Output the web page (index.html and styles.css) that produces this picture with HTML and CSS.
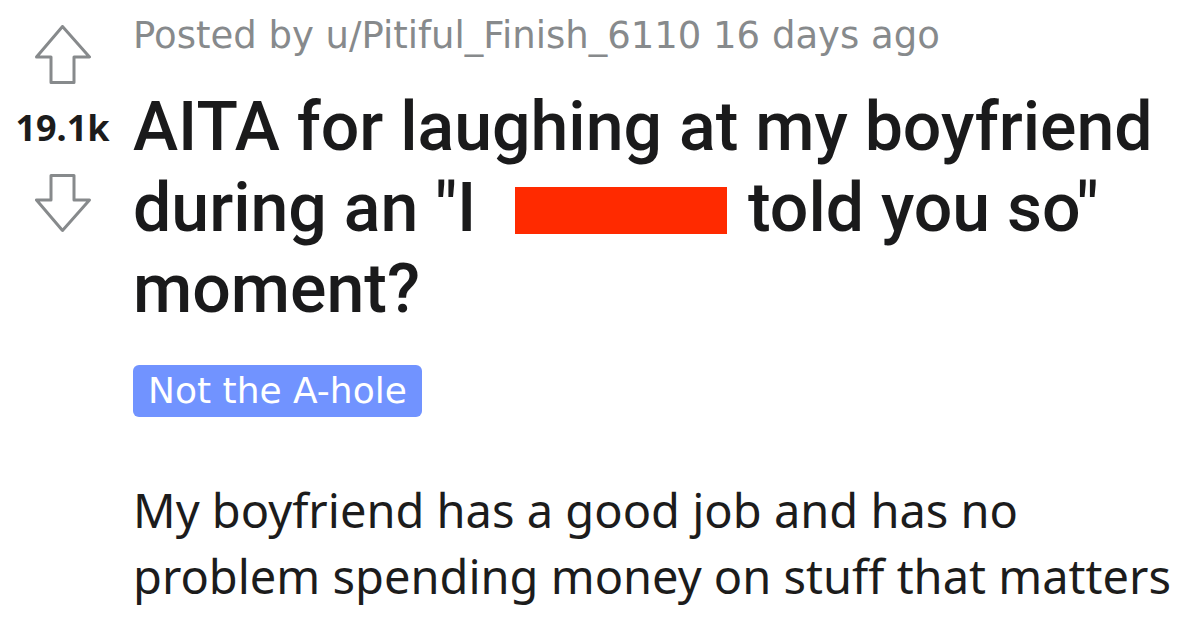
FILE: index.html
```html
<!DOCTYPE html>
<html lang="en">
<head>
    <meta charset="UTF-8">
    <title>AITA for laughing at my boyfriend</title>
    <link rel="stylesheet" href="styles.css">
</head>
<body>
    <div class="post">
        <div class="votes">
            <svg class="arrow" width="56" height="60" viewBox="0 0 56 60">
                <path d="M27.5 1.5 L54.5 32 H39 V57.5 H16 V32 H1.5 Z"/>
            </svg>
            <span class="score">19.1k</span>
            <svg class="arrow" width="56" height="60" viewBox="0 0 56 60">
                <path d="M16 2.5 H39 V27 H54.5 L27.5 57.5 L1.5 27 H16 Z"/>
            </svg>
        </div>
        <div class="content">
            <p class="meta">Posted by u/Pitiful_Finish_6110 16 days ago</p>
            <h1 class="title">AITA for laughing at my boyfriend during an "I <span class="redacted"></span> told you so" moment?</h1>
            <span class="flair">Not the A-hole</span>
            <div class="body">
                <p>My boyfriend has a good job and has no problem spending money on stuff that matters</p>
            </div>
        </div>
    </div>
</body>
</html>
```

FILE: styles.css
```css
body {
    margin: 0;
    background-color: #fff;
    font-family: "Noto Sans", Arial, sans-serif;
    color: #1c1c1c;
}
.post {
    display: flex;
}
.votes {
    width: 125px;
    flex-shrink: 0;
    display: flex;
    flex-direction: column;
    align-items: center;
    padding-top: 25px;
}
.arrow path {
    fill: none;
    stroke: #878a8c;
    stroke-width: 3;
    stroke-linejoin: round;
}
.score {
    font-size: 36px;
    font-weight: 700;
    line-height: 40px;
    margin: 23px 0 25px;
}
.content {
    padding-left: 8px;
    width: 1060px;
}
.meta {
    margin: 0;
    padding-top: 12px;
    font-family: "DejaVu Sans", sans-serif;
    font-size: 37px;
    line-height: 48px;
    color: #878a8c;
}
.title {
    margin: 27px 0 0;
    font-family: Roboto, sans-serif;
    font-size: 68px;
    font-weight: 500;
    line-height: 81px;
    color: #1a1a1b;
}
.redacted {
    display: inline-block;
    width: 212px;
    height: 47px;
    background-color: #ff2a00;
    vertical-align: -3px;
    margin: 0 4px 0 22px;
}
.flair {
    display: inline-block;
    margin-top: 35px;
    padding: 0 15px;
    height: 52px;
    line-height: 52px;
    font-family: "DejaVu Sans", sans-serif;
    font-size: 36px;
    color: #fff;
    background-color: #7193ff;
    border-radius: 6px;
}
.body p {
    margin: 60px 0 0;
    font-size: 47px;
    line-height: 66px;
    width: 1048px;
}
```
